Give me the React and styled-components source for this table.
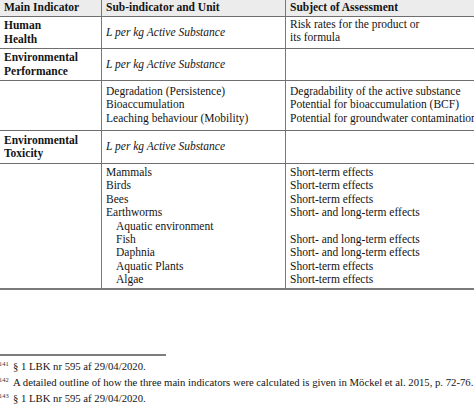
import styled, { createGlobalStyle } from 'styled-components';

const Global = createGlobalStyle`
  html, body {
    margin: 0;
    padding: 0;
    background: #fff;
    overflow: hidden;
  }
  body {
    width: 474px;
    height: 404px;
    font-family: "Liberation Serif", "Times New Roman", serif;
    color: #141414;
  }
`;

const Page = styled('div')`
  width: 474px;
  height: 404px;
  overflow: hidden;
`;

const Table = styled('div')`
  width: 500px;
  border-bottom: 2px solid #7a7a7a;
`;

const Row = styled('div')`
  display: grid;
  grid-template-columns: 101px 184px 1fr;
  height: ${(props) => props.h}px;
  border-bottom: 1px solid #6f6f6f;
  background: ${(props) => (props.head ? '#ececec' : 'transparent')};

  &:last-child {
    border-bottom: none;
  }
`;

const Cell = styled('div')`
  display: flex;
  flex-direction: column;
  justify-content: ${(props) => (props.center ? 'center' : 'flex-start')};
  padding: ${(props) => props.pt || 0}px 4px 0 4px;
  border-left: ${(props) => (props.first ? 'none' : '1px solid #777')};
  font-size: 11.5px;
  line-height: 13.4px;
  font-weight: ${(props) => (props.bold ? 700 : 400)};
  font-style: ${(props) => (props.italic ? 'italic' : 'normal')};
  white-space: nowrap;
  overflow: hidden;
`;

const Line = styled('div')`
  padding-left: ${(props) => (props.indent ? 10 : 0)}px;
  min-height: 13.4px;
`;

const Notes = styled('div')`
  margin-top: 64px;
`;

const Rule = styled('div')`
  width: 166px;
  height: 2px;
  background: #7d7d7d;
  margin-bottom: 3px;
`;

const Note = styled('div')`
  display: flex;
  align-items: baseline;
  font-size: 10.7px;
  line-height: 14px;
  white-space: nowrap;
`;

const Mark = styled('span')`
  width: 14px;
  flex: none;
  margin-left: -1px;
  font-size: 6.5px;
  position: relative;
  top: -4px;
  color: #333;
`;

export default function App() {
  return (
    <Page>
      <Global />
      <Table>
        <Row h={16} head>
          <Cell first bold center>Main Indicator</Cell>
          <Cell bold center>Sub-indicator and Unit</Cell>
          <Cell bold center>Subject of Assessment</Cell>
        </Row>
        <Row h={31}>
          <Cell first bold center>
            <Line>Human</Line>
            <Line>Health</Line>
          </Cell>
          <Cell italic center>L per kg Active Substance</Cell>
          <Cell pt={1}>
            <Line>Risk rates for the product or</Line>
            <Line>its formula</Line>
          </Cell>
        </Row>
        <Row h={31}>
          <Cell first bold center>
            <Line>Environmental</Line>
            <Line>Performance</Line>
          </Cell>
          <Cell italic center>L per kg Active Substance</Cell>
          <Cell />
        </Row>
        <Row h={49}>
          <Cell first />
          <Cell pt={4}>
            <Line>Degradation (Persistence)</Line>
            <Line>Bioaccumulation</Line>
            <Line>Leaching behaviour (Mobility)</Line>
          </Cell>
          <Cell pt={4}>
            <Line>Degradability of the active substance</Line>
            <Line>Potential for bioaccumulation (BCF)</Line>
            <Line>Potential for groundwater contamination</Line>
          </Cell>
        </Row>
        <Row h={32}>
          <Cell first bold center>
            <Line>Environmental</Line>
            <Line>Toxicity</Line>
          </Cell>
          <Cell italic center>L per kg Active Substance</Cell>
          <Cell />
        </Row>
        <Row h={124}>
          <Cell first />
          <Cell pt={2}>
            <Line>Mammals</Line>
            <Line>Birds</Line>
            <Line>Bees</Line>
            <Line>Earthworms</Line>
            <Line indent>Aquatic environment</Line>
            <Line indent>Fish</Line>
            <Line indent>Daphnia</Line>
            <Line indent>Aquatic Plants</Line>
            <Line indent>Algae</Line>
          </Cell>
          <Cell pt={2}>
            <Line>Short-term effects</Line>
            <Line>Short-term effects</Line>
            <Line>Short-term effects</Line>
            <Line>Short- and long-term effects</Line>
            <Line />
            <Line>Short- and long-term effects</Line>
            <Line>Short- and long-term effects</Line>
            <Line>Short-term effects</Line>
            <Line>Short-term effects</Line>
          </Cell>
        </Row>
      </Table>
      <Notes>
        <Rule />
        <Note>
          <Mark>141</Mark>§ 1 LBK nr 595 af 29/04/2020.
        </Note>
        <Note>
          <Mark>142</Mark>A detailed outline of how the three main indicators were calculated is given in Möckel et al. 2015, p. 72-76.
        </Note>
        <Note>
          <Mark>143</Mark>§ 1 LBK nr 595 af 29/04/2020.
        </Note>
      </Notes>
    </Page>
  );
}
